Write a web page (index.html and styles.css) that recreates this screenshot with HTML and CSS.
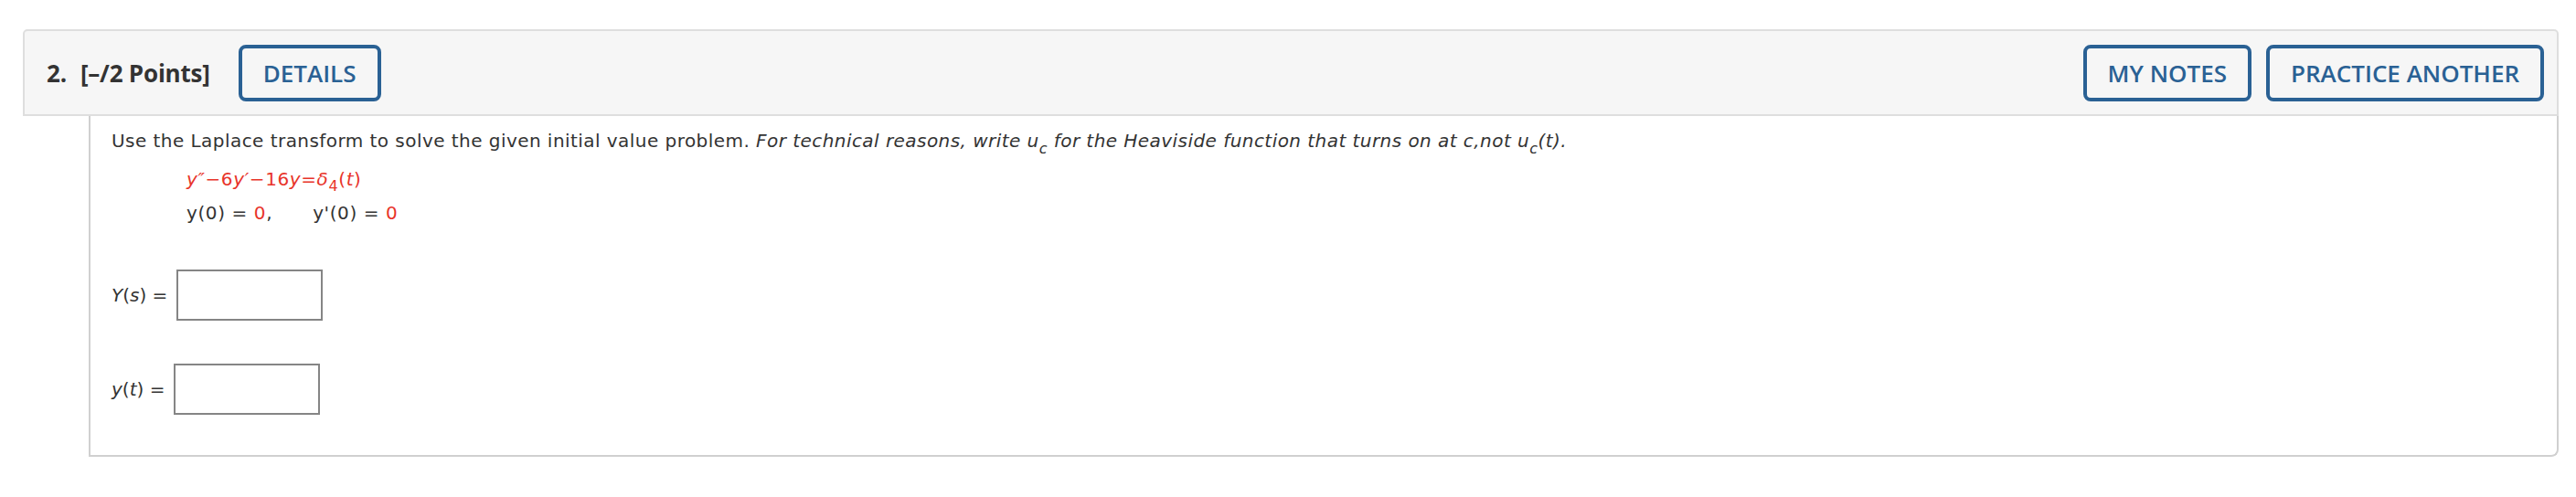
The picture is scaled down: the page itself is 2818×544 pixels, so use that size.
FILE: index.html
```html
<!DOCTYPE html>
<html lang="en">
<head>
<meta charset="utf-8">
<title>Question 2</title>
<link rel="stylesheet" href="styles.css">
</head>
<body>
<div class="page">
  <div class="question">
    <div class="q-header">
      <div class="q-left">
        <span class="q-num">2.</span>
        <span class="q-points">[–/2 Points]</span>
        <button class="btn" type="button">DETAILS</button>
      </div>
      <div class="q-right">
        <button class="btn" type="button">MY NOTES</button>
        <button class="btn" type="button">PRACTICE ANOTHER</button>
      </div>
    </div>
    <div class="q-body">
      <p class="prompt">Use the Laplace transform to solve the given initial value problem. <em>For technical reasons, write u<sub>c</sub> for the Heaviside function that turns on at c,not u<sub>c</sub>(t).</em></p>
      <div class="ivp">
        <div class="eq red"><i>y″</i>−6<i>y′</i>−16<i>y</i>=<i>δ</i><sub class="eqsub">4</sub>(<i>t</i>)</div>
        <div class="eq">y(0) = <span class="red">0</span>,<span class="sep"></span>y'(0) = <span class="red">0</span></div>
      </div>
      <div class="answer">
        <span class="lbl"><i>Y</i>(<i>s</i>) =</span>
        <span class="box"></span>
      </div>
      <div class="answer">
        <span class="lbl"><i>y</i>(<i>t</i>) =</span>
        <span class="box"></span>
      </div>
    </div>
  </div>
</div>
</body>
</html>
```

FILE: styles.css
```css
html, body {
  margin: 0;
  padding: 0;
  background: #ffffff;
}

.page {
  padding: 32px 19px 0 25px;
}

.q-header {
  display: flex;
  justify-content: space-between;
  align-items: center;
  background: #f6f6f6;
  border: 2px solid #dedede;
  border-radius: 5px 5px 0 0;
  padding: 15px 14px 14px 24px;
  font-family: "Open Sans", "Liberation Sans", sans-serif;
}

.q-left,
.q-right {
  display: flex;
  align-items: center;
}

.q-right {
  gap: 16px;
}

.q-num,
.q-points {
  font-size: 26px;
  font-weight: 700;
  color: #333333;
  letter-spacing: -0.2px;
}

.q-num {
  margin-right: 15px;
}

.q-points {
  margin-right: 31px;
}

.btn {
  display: inline-flex;
  align-items: center;
  height: 62px;
  box-sizing: border-box;
  padding: 0 23px;
  border: 4px solid #2a6194;
  border-radius: 8px;
  background: transparent;
  color: #2a6194;
  font-family: "Open Sans", "Liberation Sans", sans-serif;
  font-size: 26px;
  font-weight: 600;
  cursor: pointer;
}

.q-body {
  margin-left: 72px;
  border: 2px solid #d0d0d0;
  border-top: none;
  border-radius: 0 0 8px 0;
  padding: 14px 0 44px 23px;
  font-family: "DejaVu Sans", Verdana, sans-serif;
  font-size: 20px;
  color: #333333;
}

.prompt {
  margin: 0;
  line-height: 26px;
  letter-spacing: 0.45px;
}

.prompt em {
  font-style: italic;
}

.prompt sub {
  font-size: 16px;
  vertical-align: -7px;
  line-height: 0;
}

.ivp {
  margin: 13px 0 0 82px;
  letter-spacing: 0.6px;
}

.eq {
  line-height: 32px;
}

.eq + .eq {
  margin-top: 5px;
}

.eqsub {
  font-size: 16px;
  vertical-align: -6px;
  line-height: 0;
}

.red {
  color: #e8342a;
}

.sep {
  display: inline-block;
  width: 44px;
}

.answer {
  display: flex;
  align-items: center;
  margin-top: 46px;
}

.answer + .answer {
  margin-top: 47px;
}

.lbl {
  white-space: pre;
  margin-right: 10px;
}

.box {
  display: inline-block;
  width: 160px;
  height: 56px;
  box-sizing: border-box;
  border: 2px solid #858585;
  background: #ffffff;
}
```
